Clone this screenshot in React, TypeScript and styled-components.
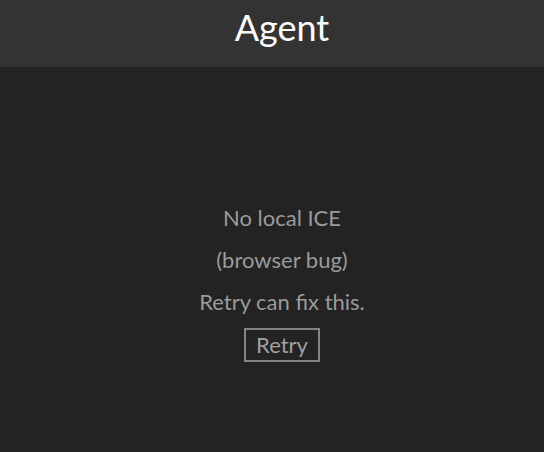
import React from "react";
import styled, { createGlobalStyle } from "styled-components";

const Global = createGlobalStyle`
  html, body { margin: 0; padding: 0; height: 100%; background: #232323; }
  #root { height: 100%; }
  * { box-sizing: border-box; }
`;

const Page = styled.div`
  display: flex;
  flex-direction: column;
  height: 452px;
  background: #232323;
  font-family: Lato, "Open Sans", sans-serif;
`;

const Header = styled.header`
  height: 67px;
  flex-shrink: 0;
  background: #333333;
  display: flex;
  align-items: center;
  justify-content: center;
  color: #ffffff;
  font-size: 36px;
  line-height: 43px;
  padding: 0 0 12px 20px;
`;

const Body = styled.main`
  flex: 1;
  display: flex;
  flex-direction: column;
  align-items: center;
  color: #9a9a9a;
  font-size: 22px;
  padding: 130px 0 0 20px;
`;

const Line = styled.div`
  line-height: 42px;
`;

const RetryButton = styled.button`
  margin-top: 5px;
  background: transparent;
  border: 2px solid #858585;
  color: #a0a0a0;
  font-family: inherit;
  font-size: 22px;
  line-height: 26px;
  padding: 2px 10px;
  cursor: pointer;
`;

export default function App() {
  return (
    <>
      <Global />
      <Page>
        <Header>Agent</Header>
        <Body>
          <Line>No local ICE</Line>
          <Line>(browser bug)</Line>
          <Line>Retry can fix this.</Line>
          <RetryButton>Retry</RetryButton>
        </Body>
      </Page>
    </>
  );
}
